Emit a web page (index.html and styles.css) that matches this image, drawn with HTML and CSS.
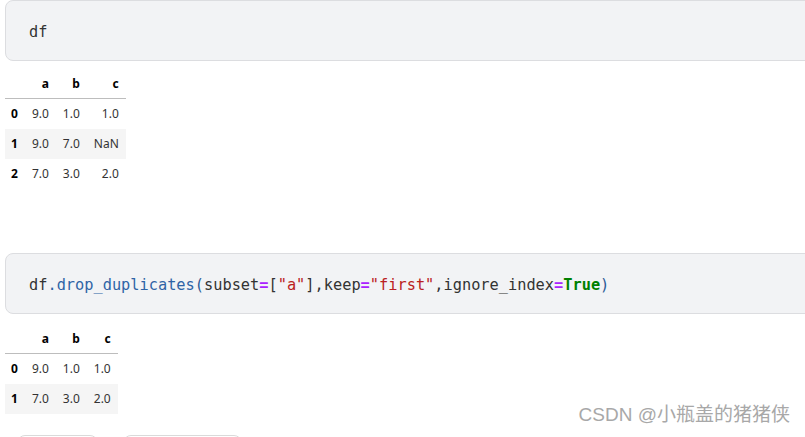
FILE: index.html
```html
<!DOCTYPE html>
<html>
<head>
<meta charset="utf-8">
<link rel="stylesheet" href="styles.css">
</head>
<body>
<div class="page">
  <div class="cell cell-first">
    <div class="code"><span class="tx">df</span></div>
  </div>
  <table class="df df-first">
    <thead>
      <tr><th></th><th>a</th><th>b</th><th>c</th></tr>
    </thead>
    <tbody>
      <tr><th>0</th><td>9.0</td><td>1.0</td><td>1.0</td></tr>
      <tr><th>1</th><td>9.0</td><td>7.0</td><td>NaN</td></tr>
      <tr><th>2</th><td>7.0</td><td>3.0</td><td>2.0</td></tr>
    </tbody>
  </table>

  <div class="cell cell-second">
    <div class="code"><span class="tx">df</span><span class="fn">.drop_duplicates</span><span class="br">(</span><span class="tx">subset</span><span class="op">=</span><span class="tx">[</span><span class="st">"a"</span><span class="tx">],keep</span><span class="op">=</span><span class="st">"first"</span><span class="tx">,ignore_index</span><span class="op">=</span><span class="kw">True</span><span class="br">)</span></div>
  </div>
  <table class="df df-second">
    <thead>
      <tr><th></th><th>a</th><th>b</th><th>c</th></tr>
    </thead>
    <tbody>
      <tr><th>0</th><td>9.0</td><td>1.0</td><td>1.0</td></tr>
      <tr><th>1</th><td>7.0</td><td>3.0</td><td>2.0</td></tr>
    </tbody>
  </table>

  <div class="buttons">
    <div class="btn btn-a"></div>
    <div class="btn btn-b"></div>
  </div>

  <div class="watermark">CSDN @小瓶盖的猪猪侠</div>
</div>
</body>
</html>
```

FILE: styles.css
```css
html, body {
  margin: 0;
  padding: 0;
  background: #ffffff;
  overflow: hidden;
}

.page {
  position: relative;
  width: 805px;
  height: 437px;
  overflow: hidden;
}

.cell {
  margin-left: 5px;
  width: 830px;
  height: 59px;
  background: #f2f3f5;
  border: 1px solid #dcdde0;
  border-radius: 8px;
  display: flex;
  align-items: center;
  box-sizing: content-box;
}

.cell-first {
  margin-top: 0;
}

.cell-second {
  margin-top: 64px;
}

.code {
  padding-left: 23px;
  padding-top: 2px;
  font-family: "DejaVu Sans Mono", "Liberation Mono", monospace;
  font-size: 15.3px;
  line-height: 20px;
  white-space: pre;
  color: #383a42;
}

.tx { color: #333333; }
.fn { color: #2f64a6; }
.br { color: #2d5b95; }
.op { color: #aa22ff; font-weight: bold; }
.st { color: #ba2121; }
.kw { color: #008000; font-weight: bold; }

.df {
  margin-left: 5px;
  border-collapse: collapse;
  border-spacing: 0;
  font-family: "Noto Sans", "Liberation Sans", sans-serif;
  font-size: 12px;
  color: #333333;
}

.df-first {
  margin-top: 8px;
}

.df-second {
  margin-top: 10px;
}

.df th,
.df td {
  padding: 0 7px;
  height: 30px;
  text-align: right;
  vertical-align: middle;
  line-height: 16px;
}

.df thead th {
  color: #000000;
  font-weight: bold;
  border-bottom: 1px solid #bdbdbd;
  height: 29px;
}

.df tbody th {
  color: #000000;
  font-weight: bold;
  padding-left: 6px;
}

.df tbody tr:nth-child(even) {
  background: #f5f5f5;
}

.buttons {
  display: flex;
  gap: 25px;
  margin-top: 21px;
  padding-left: 17px;
}

.btn {
  height: 20px;
  border: 1px solid #dadada;
  border-radius: 8px;
  background: #ffffff;
}

.btn-a { width: 79px; }
.btn-b { width: 117px; }

.watermark {
  position: absolute;
  right: 15px;
  top: 403px;
  font-family: "Liberation Sans", "Noto Sans CJK SC", sans-serif;
  font-size: 19px;
  line-height: 24px;
  color: #a8a8a8;
  text-shadow: 0 0 1px #ffffff;
}
```
